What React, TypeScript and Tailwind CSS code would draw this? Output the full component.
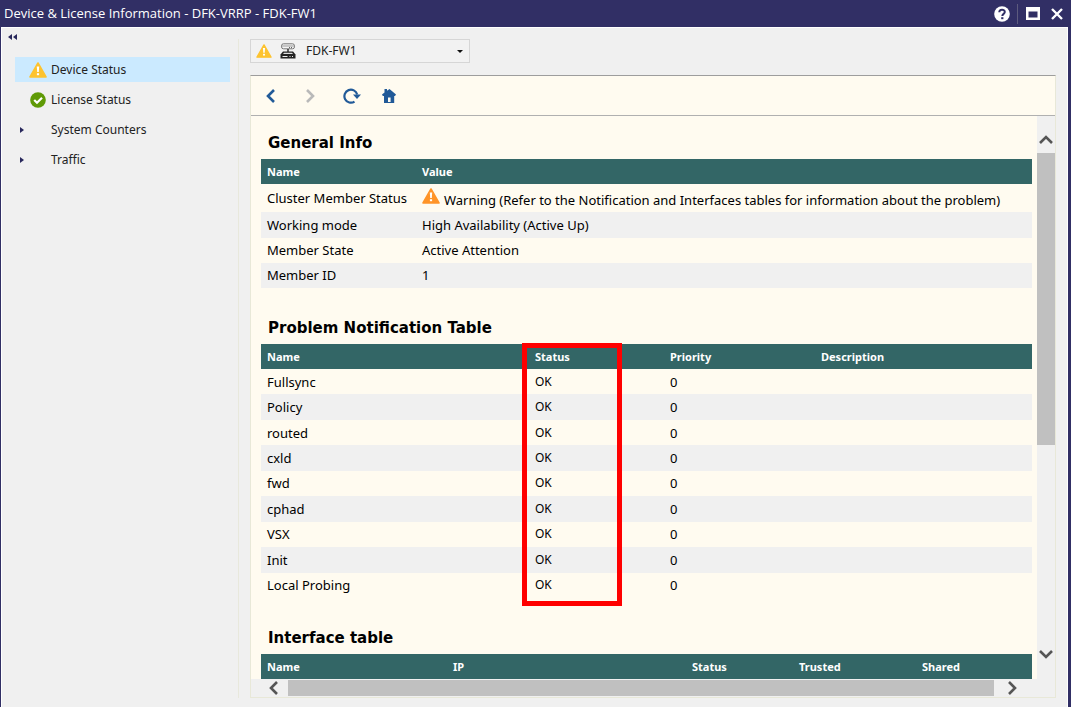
import { useState } from 'react'

interface NavItem {
    label: string
    icon?: 'warning' | 'ok'
    expandable?: boolean
}

const navItems: NavItem[] = [
    { label: 'Device Status', icon: 'warning' },
    { label: 'License Status', icon: 'ok' },
    { label: 'System Counters', expandable: true },
    { label: 'Traffic', expandable: true }
]

const problems = ['Fullsync', 'Policy', 'routed', 'cxld', 'fwd', 'cphad', 'VSX', 'Init', 'Local Probing']

function WarningIcon({ className, color = '#fdc32f' }: { className?: string; color?: string }) {
    return (
        <svg viewBox="0 0 18 16" className={className} aria-hidden="true">
            <path d="M9 1 17 15H1Z" fill={color} stroke={color} strokeWidth="1.6" strokeLinejoin="round" />
            <path d="M7.8 4.6h2.4l-.4 5.4H8.2Z" fill="#fff" />
            <rect x="7.900" y="11.2" width="2.200" height="2" fill="#fff" />
        </svg>
    )
}

function OkIcon() {
    return (
        <svg viewBox="0 0 16 16" className="size-4" aria-hidden="true">
            <circle cx="8" cy="8" r="7.8" fill="#5f9a06" />
            <path d="m4.2 8 2.8 2.8 5-5" fill="none" stroke="#fff" strokeWidth="2.2" />
        </svg>
    )
}

function ClusterIcon() {
    return (
        <svg viewBox="0 0 16 16" className="size-4" aria-hidden="true">
            <rect x="1.500" y=".8" width="13" height="5" rx="2" fill="#f4f4f4" stroke="#777" />
            <path d="M2 3h12" stroke="#999" />
            <path d="M9 4.600h1M11 4.600h1" stroke="#555" />
            <path d="M8 6v3" stroke="#222" strokeWidth="1.400" />
            <path d="M3 8.500h10l2.500 3V15.500H.500v-4Z" fill="#222" />
            <path d="M4 9.800h8l1 1.200h-10Z" fill="#ddd" />
            <path d="M2.500 13.500h5M9.500 13.500h1M12 13.500h1" stroke="#eee" />
        </svg>
    )
}

function Chevron({ d, className }: { d: string; className: string }) {
    return (
        <svg viewBox="0 0 14 14" className={className} aria-hidden="true">
            <path d={d} fill="none" stroke="currentColor" strokeWidth="2.6" />
        </svg>
    )
}

const headCell = 'px-1.5 text-left text-[11px] font-bold'

function Section({ title, children }: { title: string; children: React.ReactNode }) {
    return (
        <section>
            <h2 className="pl-[7px] font-['DejaVu_Sans','Verdana',sans-serif] text-[15px] leading-[31px] font-bold">{title}</h2>
            <div className="relative">{children}</div>
        </section>
    )
}

export default function App() {
    const [active, setActive] = useState('Device Status')

    return (
        <div className="flex h-screen flex-col overflow-hidden bg-[#312f65] font-['Noto_Sans','Open_Sans',sans-serif] text-[#222]">
            <header className="flex h-[27px] shrink-0 items-center pr-2 pl-1 text-white">
                <h1 className="flex-1 font-['Open_Sans','Noto_Sans',sans-serif] text-[13px]">Device &amp; License Information - DFK-VRRP - FDK-FW1</h1>
                <button aria-label="Help" className="flex">
                    <svg viewBox="0 0 16 16" className="size-4">
                        <circle cx="8" cy="8" r="7.800" fill="#fff" />
                        <path d="M5.300 6.200C5.300 2.900 10.800 3 10.800 6 10.800 7.900 8.300 7.900 8.300 10" fill="none" stroke="#312f65" strokeWidth="2" />
                        <rect x="7.200" y="11.200" width="2.200" height="2" fill="#312f65" />
                    </svg>
                </button>
                <span className="mx-[7px] h-5 w-px bg-[#5d5b7e]" />
                <button aria-label="Maximize" className="flex">
                    <svg viewBox="0 0 16 14" className="h-3.5 w-4">
                        <path d="M1 0h14v13H1ZM3.500 4.500v6h9v-6Z" fill="#fff" fillRule="evenodd" />
                    </svg>
                </button>
                <button aria-label="Close" className="ml-2.5 flex">
                    <svg viewBox="0 0 12 12" className="size-3">
                        <path d="m1 1 10 10M11 1 1 11" stroke="#fff" strokeWidth="2.400" />
                    </svg>
                </button>
            </header>

            <div className="mr-[3px] ml-px flex min-h-0 flex-1 border border-b-0 border-white bg-[#f0f0f0]">
                <aside className="w-[236px] shrink-0">
                    <button aria-label="Collapse" className="ml-1.5 flex h-[29px] pt-1.5">
                        <svg viewBox="0 0 9 6" className="h-1.5 w-[9px]">
                            <path d="M4 0v6L0 3ZM9 0v6L5 3Z" fill="#29285c" />
                        </svg>
                    </button>
                    <nav className="flex flex-col gap-[5px] pr-2 pl-[13px]">
                        {navItems.map(item => (
                            <button
                                key={item.label}
                                onClick={() => setActive(item.label)}
                                className={`flex h-[25px] items-center text-left text-[12px] ${active === item.label ? 'bg-[#cbeaff]' : ''}`}
                            >
                                <span className="flex w-[14px] justify-center">
                                    {item.expandable && (
                                        <svg viewBox="0 0 4 6" className="h-1.5 w-1">
                                            <path d="M0 0v6L4 3Z" fill="#29285c" />
                                        </svg>
                                    )}
                                </span>
                                <span className="mr-1 flex w-[18px] justify-center">
                                    {item.icon === 'warning' && <WarningIcon className="h-4 w-[18px]" />}
                                    {item.icon === 'ok' && <OkIcon />}
                                </span>
                                {item.label}
                            </button>
                        ))}
                    </nav>
                </aside>

                <main className="flex min-w-0 flex-1 flex-col pt-[11px] pr-[11px] pb-[9px]">
                    <div className="flex min-h-0 flex-1 flex-col border-l border-[#e8e8dc] pl-[11px]">
                        <div className="flex h-6 w-[220px] shrink-0 items-center border border-[#d6d6d6] bg-[#f2f2f2] pr-1.5 pl-[5px]">
                            <WarningIcon className="h-3.5 w-4 shrink-0" />
                            <span className="ml-2 flex shrink-0">
                                <ClusterIcon />
                            </span>
                            <select aria-label="Cluster member" className="min-w-0 flex-1 appearance-none bg-transparent pl-2.5 text-[12px]">
                                <option>FDK-FW1</option>
                            </select>
                            <svg viewBox="0 0 6 3" className="h-[3px] w-1.5 shrink-0">
                                <path d="M0 0h6L3 3Z" fill="#111" />
                            </svg>
                        </div>

                        <div className="mt-3 flex min-h-0 flex-1 flex-col border border-t-[#9d9d9d] border-r-[#e8e8d8] border-b-[#e8e8d8] border-l-[#e8e8d8] bg-[#fffbf0]">
                            <div className="flex h-10 shrink-0 items-center border-b border-[#b0b0b0] pl-[13px] text-[#215a98]">
                                <button aria-label="Back" className="flex">
                                    <Chevron d="M10 1 4 7l6 6" className="size-3.5" />
                                </button>
                                <button aria-label="Forward" className="ml-[25px] flex text-[#b9b9b9]">
                                    <Chevron d="m4 1 6 6-6 6" className="size-3.5" />
                                </button>
                                <button aria-label="Refresh" className="ml-[26px] flex">
                                    <svg viewBox="0 0 18 16" className="h-4 w-[18px]">
                                        <path d="M11.500 13.600A6.500 6.500 0 1 1 14.200 6.500" fill="none" stroke="currentColor" strokeWidth="2.200" />
                                        <path d="M10 6.500h8l-4 4.500Z" fill="currentColor" />
                                    </svg>
                                </button>
                                <button aria-label="Home" className="ml-[21px] flex">
                                    <svg viewBox="0 0 14 15" className="h-[15px] w-3.5">
                                        <path d="M2.500 1H5v1.800L7.500 1 14 6.500 13 8h-.800v7H2V8H.800L0 6.500l2.500-2Z" fill="currentColor" />
                                        <path d="M6 14V9.500h2.600V14Z" fill="#fffbf0" />
                                    </svg>
                                </button>
                            </div>

                            <div className="flex min-h-0 flex-1">
                                <div className="flex min-w-0 flex-1 flex-col gap-[25px] overflow-hidden pt-3 pr-[5px] pl-2.5 text-[13px] leading-4 text-black">
                                    <Section title="General Info">
                                        <table className="h-[129px] w-full table-fixed">
                                            <colgroup>
                                                <col className="w-[155px]" />
                                                <col />
                                            </colgroup>
                                            <thead>
                                                <tr className="h-[25px] bg-[#336666] text-white">
                                                    <th className={headCell}>Name</th>
                                                    <th className={headCell}>Value</th>
                                                </tr>
                                            </thead>
                                            <tbody className="[&>tr:nth-child(even)]:bg-[#f0f0f0]">
                                                <tr className="h-7">
                                                    <td className="px-1.5">Cluster Member Status</td>
                                                    <td className="px-1.5">
                                                        <span className="flex items-end gap-1 whitespace-nowrap">
                                                            <WarningIcon className="mb-1 h-4 w-[18px]" color="#ff9428" />
                                                            Warning (Refer to the Notification and Interfaces tables for information about the problem)
                                                        </span>
                                                    </td>
                                                </tr>
                                                <tr className="h-[25px]">
                                                    <td className="px-1.5">Working mode</td>
                                                    <td className="px-1.5">High Availability (Active Up)</td>
                                                </tr>
                                                <tr className="h-[25px]">
                                                    <td className="px-1.5">Member State</td>
                                                    <td className="px-1.5">Active Attention</td>
                                                </tr>
                                                <tr className="h-[25px]">
                                                    <td className="px-1.5">Member ID</td>
                                                    <td className="px-1.5">1</td>
                                                </tr>
                                            </tbody>
                                        </table>
                                    </Section>

                                    <Section title="Problem Notification Table">
                                        <table className="h-[254px] w-full table-fixed">
                                            <colgroup>
                                                <col className="w-[268px]" />
                                                <col className="w-[135px]" />
                                                <col className="w-[151px]" />
                                                <col />
                                            </colgroup>
                                            <thead>
                                                <tr className="h-[25px] bg-[#336666] text-white">
                                                    <th className={headCell}>Name</th>
                                                    <th className={headCell}>Status</th>
                                                    <th className={headCell}>Priority</th>
                                                    <th className={headCell}>Description</th>
                                                </tr>
                                            </thead>
                                            <tbody className="[&>tr:nth-child(even)]:bg-[#f0f0f0]">
                                                {problems.map(name => (
                                                    <tr key={name}>
                                                        <td className="px-1.5">{name}</td>
                                                        <td className="px-1.5 text-[12px]">OK</td>
                                                        <td className="px-1.5">0</td>
                                                        <td />
                                                    </tr>
                                                ))}
                                            </tbody>
                                        </table>
                                        {/* highlight around the status column */}
                                        <div className="pointer-events-none absolute -top-px -bottom-2 left-[261px] w-[100px] border-[5px] border-[#ff0000]" />
                                    </Section>

                                    <Section title="Interface table">
                                        <table className="w-full table-fixed">
                                            <colgroup>
                                                <col className="w-[186px]" />
                                                <col className="w-[239px]" />
                                                <col className="w-[107px]" />
                                                <col className="w-[123px]" />
                                                <col />
                                            </colgroup>
                                            <thead>
                                                <tr className="h-[25px] bg-[#336666] text-white">
                                                    <th className={headCell}>Name</th>
                                                    <th className={headCell}>IP</th>
                                                    <th className={headCell}>Status</th>
                                                    <th className={headCell}>Trusted</th>
                                                    <th className={headCell}>Shared</th>
                                                </tr>
                                            </thead>
                                        </table>
                                    </Section>
                                </div>

                                <div className="flex w-[18px] shrink-0 flex-col items-center bg-[#f0f0f0] pt-4 pb-4 text-[#555]">
                                    <button aria-label="Scroll up" className="flex h-[21px]">
                                        <Chevron d="m1 11 6-6 6 6" className="size-3.5" />
                                    </button>
                                    <div className="flex w-full flex-1 flex-col">
                                        <div className="h-[59%] bg-[#c0c0c0]" />
                                    </div>
                                    <button aria-label="Scroll down" className="flex h-[15px]">
                                        <Chevron d="m1 3 6 6 6-6" className="size-3.5" />
                                    </button>
                                </div>
                            </div>

                            <div className="flex h-[18px] shrink-0 items-center bg-[#f0f0f0] pr-9 pl-4 text-[#555]">
                                <button aria-label="Scroll left" className="flex w-[21px]">
                                    <Chevron d="M10 1 4 7l6 6" className="size-3.5" />
                                </button>
                                <div className="h-4 flex-1 bg-[#c0c0c0]" />
                                <button aria-label="Scroll right" className="flex w-[25px] justify-end">
                                    <Chevron d="m4 1 6 6-6 6" className="size-3.5" />
                                </button>
                            </div>
                        </div>
                    </div>
                </main>
            </div>
        </div>
    )
}
